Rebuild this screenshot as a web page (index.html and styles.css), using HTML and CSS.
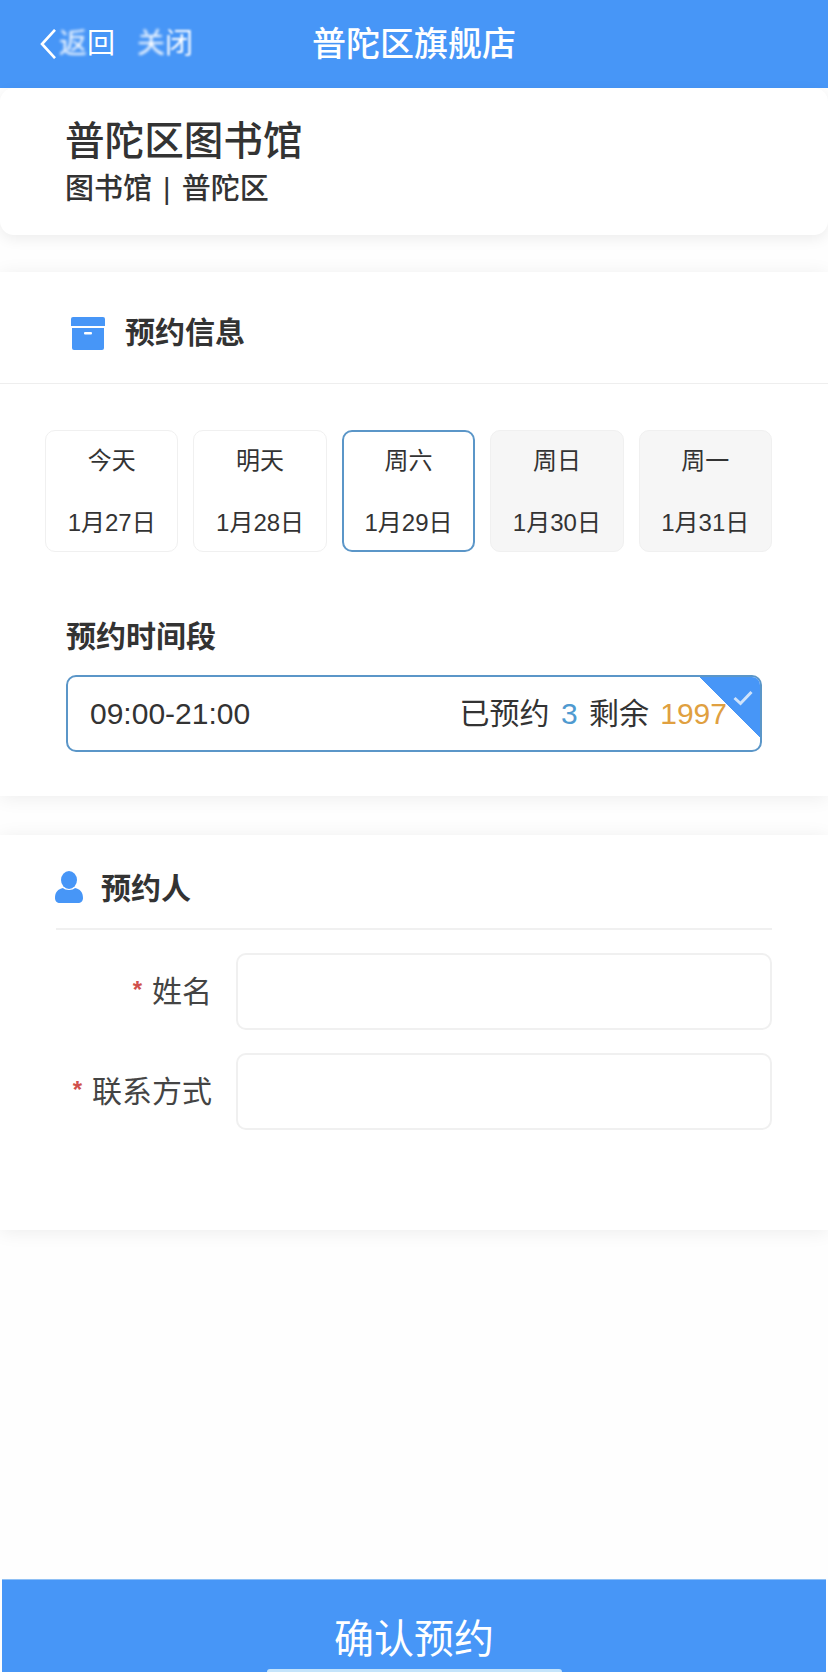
FILE: index.html
```html
<!DOCTYPE html>
<html lang="zh-CN">
<head>
<meta charset="utf-8">
<title>普陀区旗舰店</title>
<link rel="stylesheet" href="styles.css">
</head>
<body>
<div class="page">
  <header class="topbar">
    <div class="nav">
      <svg class="chevron" viewBox="0 0 16 30" width="16" height="30"><path d="M15 .8 2 15 15 29.200" fill="none" stroke="#fff" stroke-width="2.600"/></svg>
      <span class="nav-back"><span class="smudge">返</span>回</span>
      <span class="nav-close"><span class="smudge">关</span><span class="smudge-light">闭</span></span>
    </div>
    <h1 class="topbar-title">普陀区旗舰店</h1>
  </header>

  <section class="venue">
    <h2 class="venue-name">普陀区图书馆</h2>
    <p class="venue-meta">图书馆 | 普陀区</p>
  </section>

  <section class="panel panel-booking">
    <div class="panel-head">
      <svg class="icon-box" viewBox="0 0 34 33" width="34" height="33"><path d="M0 2a2 2 0 0 1 2-2h30a2 2 0 0 1 2 2v7H0z" fill="#4796f7"/><path d="M1 11h32v20a2 2 0 0 1-2 2H3a2 2 0 0 1-2-2z" fill="#4796f7"/><rect x="13" y="15" width="8" height="2.500" rx="1" fill="#fff"/></svg>
      <h3 class="panel-title">预约信息</h3>
    </div>
    <div class="dates">
      <div class="date"><span>今天</span><span>1月27日</span></div>
      <div class="date"><span>明天</span><span>1月28日</span></div>
      <div class="date date-active"><span>周六</span><span>1月29日</span></div>
      <div class="date date-off"><span>周日</span><span>1月30日</span></div>
      <div class="date date-off"><span>周一</span><span>1月31日</span></div>
    </div>
    <h4 class="slot-title">预约时间段</h4>
    <div class="slot">
      <span class="slot-time">09:00-21:00</span>
      <span class="slot-info">已预约 <b class="num-blue">3</b> 剩余 <b class="num-orange">1997</b></span>
      <span class="slot-corner"></span>
      <svg class="slot-check" viewBox="0 0 20 16" width="20" height="16"><path d="M1.500 8 7.500 13.500 18.500 2" fill="none" stroke="#cfe3fb" stroke-width="3"/></svg>
    </div>
  </section>

  <section class="panel panel-person">
    <div class="person-head">
      <svg class="icon-user" viewBox="0 0 28 32" width="28" height="32"><ellipse cx="14" cy="9" rx="8" ry="9" fill="#4796f7"/><path d="M0 27c0-6 3-9 8-10 2 2.500 10 2.500 12 0 5 1 8 4 8 10 0 3-2 5-5 5H5c-3 0-5-2-5-5z" fill="#4796f7"/></svg>
      <h3 class="panel-title">预约人</h3>
    </div>
    <div class="form">
      <label class="row"><span class="row-label"><i class="req">*</i>姓名</span><input class="field" type="text"></label>
      <label class="row"><span class="row-label"><i class="req">*</i>联系方式</span><input class="field" type="text"></label>
    </div>
  </section>

  <footer class="submit">确认预约<span class="home-bar"></span></footer>
</div>
</body>
</html>
```
FILE: styles.css
```css
* { box-sizing: border-box; }
html, body { margin: 0; padding: 0; }
body {
  font-family: "Liberation Sans", "Noto Sans CJK SC", sans-serif;
  color: #333;
  background: #fefefe;
}
h1, h2, h3, h4, p { margin: 0; }

.page {
  position: relative;
  display: flex;
  flex-direction: column;
  width: 828px;
  height: 1672px;
  overflow: hidden;
}

.topbar {
  display: grid;
  grid-template-columns: 1fr auto 1fr;
  align-items: center;
  height: 88px;
  background: #4796f7;
  color: #fff;
}
.nav {
  display: flex;
  align-items: center;
  padding-left: 40px;
  font-size: 28px;
  line-height: 40px;
  grid-column: 1;
}
.chevron { flex: none; margin-right: 3px; }
.nav-close { margin-left: 22px; }
.smudge { filter: blur(1.6px); }
.smudge-light { filter: blur(.8px); }
.topbar-title {
  grid-column: 2;
  font-size: 34px;
  line-height: 44px;
  font-weight: 500;
  white-space: nowrap;
}

.venue {
  height: 147px;
  padding: 27px 0 0 65px;
  background: #fff;
  border-radius: 14px;
  box-shadow: 0 4px 14px rgba(0, 0, 0, .07);
}
.venue-name { font-size: 39.600px; line-height: 52px; font-weight: 500; }
.venue-meta { margin-top: 2px; font-size: 29px; line-height: 40px; font-weight: 500; word-spacing: 3px; }

.panel {
  background: #fff;
  box-shadow: 0 2px 18px rgba(0, 0, 0, .07);
}
.panel-booking { margin-top: 37px; height: 524px; }
.panel-person { margin-top: 39px; height: 395px; }
.panel-head {
  display: flex;
  align-items: center;
  gap: 20px;
  height: 112px;
  padding: 11px 0 0 71px;
  border-bottom: 1px solid #eeeeee;
}
.panel-title { font-size: 30px; line-height: 40px; font-weight: 700; }

.dates {
  display: grid;
  grid-template-columns: repeat(5, 1fr);
  gap: 15px;
  margin: 46px 56px 0 45px;
}
.date {
  display: flex;
  flex-direction: column;
  align-items: center;
  gap: 30px;
  height: 122px;
  padding-top: 14px;
  border: 1px solid #f0f0f0;
  border-radius: 10px;
  font-size: 24px;
  line-height: 32px;
}
.date-active { border: 2px solid #5b96c8; padding-top: 13px; }
.date-off { background: #f6f6f6; }

.slot-title {
  margin: 65px 0 0 66px;
  font-size: 30px;
  line-height: 40px;
  font-weight: 700;
}
.slot {
  position: relative;
  display: flex;
  align-items: center;
  justify-content: space-between;
  height: 77px;
  margin: 18px 66px 0;
  padding: 0 33px 0 22px;
  border: 2px solid #5b96c8;
  border-radius: 10px;
  overflow: hidden;
  font-size: 30px;
  line-height: 40px;
}
.slot-info { word-spacing: 3px; }
.slot-info b { font-weight: 400; }
.num-blue { color: #4f9ad0; }
.num-orange { color: #e0a040; }
.slot-corner {
  position: absolute;
  top: -2px;
  right: -2px;
  width: 64px;
  height: 64px;
  background: linear-gradient(45deg, transparent 50%, #4796f7 50%);
}
.slot-check { position: absolute; top: 13px; right: 7px; }

.person-head {
  display: flex;
  align-items: center;
  gap: 18px;
  height: 95px;
  margin: 0 56px;
  padding-top: 15px;
  border-bottom: 2px solid #f0f0f0;
}
.icon-user { margin-left: -1px; margin-top: -4px; }

.form {
  display: flex;
  flex-direction: column;
  gap: 23px;
  margin: 23px 56px 0;
}
.row { display: flex; align-items: center; height: 77px; }
.row-label {
  flex: none;
  width: 180px;
  padding: 0 24px 0 0;
  text-align: right;
  font-size: 30px;
  line-height: 40px;
  color: #444;
}
.req {
  margin-right: 10px;
  color: #d0504c;
  font-style: normal;
  font-weight: 700;
  font-size: 24px;
  line-height: 1;
  vertical-align: 4px;
}
.field {
  flex: 1;
  min-width: 0;
  height: 77px;
  border: 2px solid #f0f0f0;
  border-radius: 10px;
  background: #fff;
  outline: none;
}

.submit {
  margin: auto 2px 0;
  height: 93px;
  padding-top: 34px;
  background: #4796f7;
  border-top: 1px solid #8fc0f5;
  color: #fff;
  text-align: center;
  font-size: 40px;
  line-height: 50px;
}
.home-bar {
  position: absolute;
  left: 267px;
  bottom: 0;
  width: 295px;
  height: 3px;
  border-radius: 3px 3px 0 0;
  background: #c4e4fb;
}
```
